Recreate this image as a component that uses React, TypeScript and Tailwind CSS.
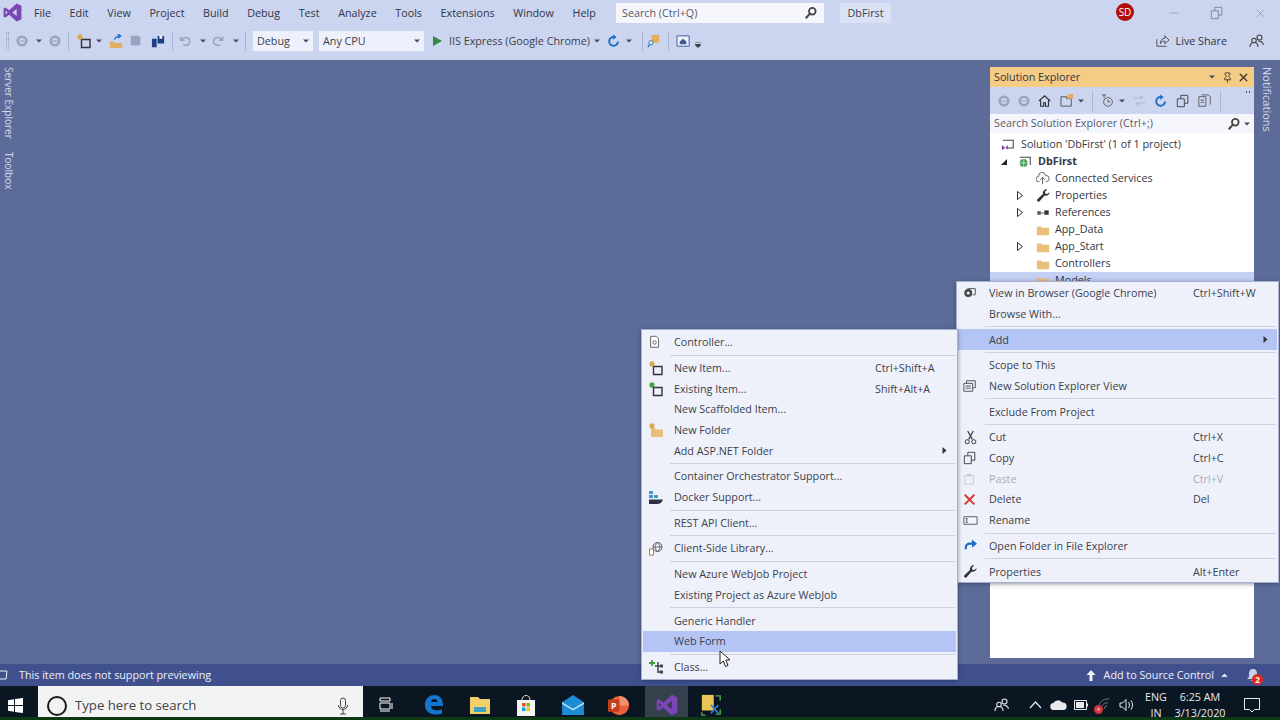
import React from 'react';
import { ChevronUp, Minus, Pin, X } from 'lucide-react';

type Glyph = React.ReactNode;

const Svg = ({ s = 16, children, className }: { s?: number; children: React.ReactNode; className?: string }) => (
  <svg width={s} height={s} viewBox="0 0 16 16" className={className}>
    {children}
  </svg>
);

const Caret = () => (
  <svg width="6" height="4" viewBox="0 0 6 4" className="shrink-0">
    <path d="M0 0.5h6L3 3.5z" fill="#444c66" />
  </svg>
);

const VsLogo = ({ s = 18 }: { s?: number }) => (
  <Svg s={s}>
    <path d="M11.5 0.5 15.500 2.300v11.400L11.500 15.500 5.200 9.800 2 12.300 0.500 11.500v-7L2 3.700 5.200 6.200zM11.500 5 7.800 8l3.700 3zM2.200 6.300v3.400L3.900 8z" fill="#7b45b5" fillRule="evenodd" />
  </Svg>
);

const Folder = ({ c = '#e8c07a' }: { c?: string }) => (
  <Svg s={14}>
    <path d="M1 4h5l1 1.500h8V14H1z" fill={c} />
  </Svg>
);

const Nav = ({ c = '#9aa3bf' }: { c?: string }) => (
  <svg width="12" height="12" viewBox="0 0 12 12">
    <circle cx="6" cy="6" r="5.500" fill={c} />
    <circle cx="6" cy="6" r="3" fill="#ccd5f0" />
    <path d="M3.500 6h5" stroke={c} strokeWidth="1.200" />
  </svg>
);

const Refresh = () => (
  <Svg s={14}>
    <path d="M12.500 8.500A5 5 0 1 1 8 3.500" fill="none" stroke="#1c6fc4" strokeWidth="2.200" />
    <path d="M7 0.500v6l4-3z" fill="#1c6fc4" />
  </Svg>
);

const Vbar = () => <div className="w-px h-[20px] bg-[#a9b3d3]" />;

const Copy = ({ c = '#444' }: { c?: string }) => (
  <Svg s={14}>
    <path d="M1.500 5.500h8v9h-8zM5.500 5V1.500h8v9H10" fill="none" stroke={c} strokeWidth="1.100" />
  </Svg>
);

const Wrench = ({ c = '#333' }: { c?: string }) => (
  <Svg s={15}>
    <path d="M14.500 4.200a4 4 0 0 1-5.300 3.800L3.800 14a1.500 1.500 0 0 1-2.300-2L7.400 6.500A4 4 0 0 1 12 1.500L9.500 4l.5 2 2 .5z" fill={c} />
  </Svg>
);

const Lens = () => (
  <Svg s={14}>
    <circle cx="9.500" cy="6" r="3.800" fill="none" stroke="#444" strokeWidth="2" />
    <path d="M6.500 9l-4.500 5" stroke="#444" strokeWidth="2.400" />
  </Svg>
);

const NewBox = ({ star }: { star: string }) => (
  <Svg s={16}>
    <path d="M5.500 6.500h8.500v8H5.500z" fill="none" stroke="#333" strokeWidth="1.400" />
    <path d="M4 1v6M1 4h6M2 2l4 4M6 2 2 6" stroke={star} strokeWidth="1.200" />
  </Svg>
);

const ClassIcon = () => (
  <Svg s={16}>
    <path d="M4 1v6M1 4h6" stroke="#3d9a3d" strokeWidth="1.800" />
    <path d="M10 3v11M7 7h6M10 13h3" fill="none" stroke="#444" strokeWidth="1.500" />
    <rect x="12" y="5.500" width="3" height="3" fill="#444" />
    <rect x="12" y="11.500" width="3" height="3" fill="#444" />
  </Svg>
);

type Row = { sep: true } | { label: string; icon?: Glyph; key?: string; sub?: boolean; on?: boolean; off?: boolean };

const leftMenu: Row[] = [
  {
    label: 'Controller...',
    icon: (
      <Svg s={14}>
        <path d="M3 1.500h6.500L12 4v10H3z" fill="#fff" stroke="#555" />
        <circle cx="7.500" cy="8.500" r="2" fill="none" stroke="#555" />
      </Svg>
    ),
  },
  { sep: true },
  { label: 'New Item...', key: 'Ctrl+Shift+A', icon: <NewBox star="#d9a441" /> },
  { label: 'Existing Item...', key: 'Shift+Alt+A', icon: <NewBox star="#3d9a3d" /> },
  { label: 'New Scaffolded Item...' },
  {
    label: 'New Folder',
    icon: (
      <Svg s={16}>
        <path d="M3 6h4l1 1.500h7V15H3z" fill="#e8c07a" />
        <path d="M4 1v6M1 4h6M2 2l4 4M6 2 2 6" stroke="#d9a441" strokeWidth="1.200" />
      </Svg>
    ),
  },
  { label: 'Add ASP.NET Folder', sub: true },
  { sep: true },
  { label: 'Container Orchestrator Support...' },
  {
    label: 'Docker Support...',
    icon: (
      <Svg s={16}>
        <path d="M1 2h4v3H1zM1 6h4v3H1zM6 6h4v3H6z" fill="#4b94c9" />
        <path d="M1 10.500h14c-1 3-3 4.500-6 4.500H1z" fill="#2c3242" />
      </Svg>
    ),
  },
  { sep: true },
  { label: 'REST API Client...' },
  { sep: true },
  {
    label: 'Client-Side Library...',
    icon: (
      <Svg s={16}>
        <circle cx="9.500" cy="6" r="4.500" fill="none" stroke="#555" />
        <path d="M5 6h9M9.500 1.500c-3 3-3 6 0 9M9.500 1.500c3 3 3 6 0 9" fill="none" stroke="#555" strokeWidth="0.800" />
        <rect x="1.500" y="8" width="4" height="6" fill="#fff" stroke="#d2752d" />
      </Svg>
    ),
  },
  { sep: true },
  { label: 'New Azure WebJob Project' },
  { label: 'Existing Project as Azure WebJob' },
  { sep: true },
  { label: 'Generic Handler' },
  { label: 'Web Form', on: true },
  { sep: true },
  { label: 'Class...', icon: <ClassIcon /> },
];

const rightMenu: Row[] = [
  {
    label: 'View in Browser (Google Chrome)',
    key: 'Ctrl+Shift+W',
    icon: (
      <Svg s={14}>
        <path d="M5 3h9v7h-3" fill="none" stroke="#444" />
        <circle cx="6" cy="8" r="4.500" fill="#444" />
        <circle cx="6" cy="8" r="1.800" fill="#eef1fa" />
      </Svg>
    ),
  },
  { label: 'Browse With...' },
  { sep: true },
  { label: 'Add', sub: true, on: true },
  { sep: true },
  { label: 'Scope to This' },
  {
    label: 'New Solution Explorer View',
    icon: (
      <Svg s={14}>
        <path d="M1 5h10v9H1zM4 5V2h10v8h-3" fill="none" stroke="#444" />
        <path d="M3 8h6M3 10.500h6" stroke="#444" />
      </Svg>
    ),
  },
  { sep: true },
  { label: 'Exclude From Project' },
  { sep: true },
  {
    label: 'Cut',
    key: 'Ctrl+X',
    icon: (
      <Svg s={15}>
        <path d="M5 1l5 9M11 1l-5 9" stroke="#333" strokeWidth="1.200" />
        <circle cx="4.500" cy="12.500" r="2.200" fill="none" stroke="#333" />
        <circle cx="11.500" cy="12.500" r="2.200" fill="none" stroke="#333" />
      </Svg>
    ),
  },
  { label: 'Copy', key: 'Ctrl+C', icon: <Copy /> },
  {
    label: 'Paste',
    key: 'Ctrl+V',
    off: true,
    icon: (
      <Svg s={14}>
        <path d="M2 4h10v10H2z" fill="#eef0f6" stroke="#c4c8d4" />
        <path d="M5 2h4v3H5z" fill="#c4c8d4" />
      </Svg>
    ),
  },
  {
    label: 'Delete',
    key: 'Del',
    icon: (
      <Svg s={14}>
        <path d="M2 2l11 11M13 2 2 13" stroke="#d13a2c" strokeWidth="2.200" />
      </Svg>
    ),
  },
  {
    label: 'Rename',
    icon: (
      <Svg s={15}>
        <path d="M1 4h14v8H1z" fill="#f4f5fa" stroke="#555" />
        <path d="M4 6v4M3 6h2M3 10h2" stroke="#333" strokeWidth="0.800" />
      </Svg>
    ),
  },
  { sep: true },
  {
    label: 'Open Folder in File Explorer',
    icon: (
      <Svg s={15}>
        <path d="M13 6H7a4 4 0 0 0-4 4v2" fill="none" stroke="#1c6fc4" strokeWidth="2.400" />
        <path d="M9.500 1.500 15 6l-5.500 4.500z" fill="#1c6fc4" />
      </Svg>
    ),
  },
  { sep: true },
  { label: 'Properties', key: 'Alt+Enter', icon: <Wrench /> },
];

const Menu = ({ rows, className, keyCol }: { rows: Row[]; className: string; keyCol: string }) => (
  <div className={`absolute z-10 bg-[#eff1fa] border border-[#a7b0cd] shadow-[0_1px_4px_rgba(30,40,80,0.5)] ${className}`}>
    {rows.map((r, i) =>
      'sep' in r ? (
        <div key={i} className="h-[5px] flex items-center pl-[28px] pr-[2px]">
          <div className="h-px w-full bg-[#ccd2e4]" />
        </div>
      ) : (
        <div key={i} className={`h-[20.7px] mx-[1px] flex items-center ${r.on ? 'bg-[#b3c4f5]' : ''} ${r.off ? 'text-[#a9adba]' : 'text-[#3b3f4c]'}`}>
          <div className="w-[31px] pl-[5px] shrink-0 flex items-center">{r.icon}</div>
          <span className="flex-1 whitespace-nowrap">{r.label}</span>
          {r.key && <span className={`shrink-0 whitespace-nowrap ${keyCol}`}>{r.key}</span>}
          {r.sub && (
            <svg width="5" height="7" viewBox="0 0 5 7" className="mr-[9px]">
              <path d="M0.500 0v7L4.500 3.500z" fill="#333" />
            </svg>
          )}
        </div>
      ),
    )}
  </div>
);

const tree: { label: string; indent: number; iconW: string; arrow?: 'open' | 'closed'; icon: Glyph; bold?: boolean; on?: boolean }[] = [
  {
    label: "Solution 'DbFirst' (1 of 1 project)",
    indent: 11,
    iconW: 'w-[20px]',
    icon: (
      <Svg s={14}>
        <path d="M2 2.500h12v9H6" fill="none" stroke="#444" strokeWidth="1.200" />
        <path d="M1 8l4 3 3-3v5l-3-2-4 3z" fill="#7b4bb3" />
      </Svg>
    ),
  },
  {
    label: 'DbFirst',
    indent: 28,
    iconW: 'w-[20px]',
    arrow: 'open',
    bold: true,
    icon: (
      <Svg s={14}>
        <path d="M2 2.500h12v9" fill="none" stroke="#444" strokeWidth="1.200" />
        <circle cx="6.500" cy="9" r="4.500" fill="#4b9e5a" />
        <path d="M2 9h9M6.500 4.500v9" stroke="#d9efdd" strokeWidth="0.800" />
      </Svg>
    ),
  },
  {
    label: 'Connected Services',
    indent: 46,
    iconW: 'w-[19px]',
    icon: (
      <Svg s={14}>
        <path d="M4 11H3a3 3 0 0 1 0-6 4 4 0 0 1 8-1 3.500 3.500 0 0 1 1 7h-1" fill="none" stroke="#555" />
        <path d="M7.500 6v8M5 9l2.500-3L10 9" fill="none" stroke="#555" />
      </Svg>
    ),
  },
  { label: 'Properties', indent: 46, iconW: 'w-[19px]', arrow: 'closed', icon: <Wrench /> },
  {
    label: 'References',
    indent: 46,
    iconW: 'w-[19px]',
    arrow: 'closed',
    icon: (
      <Svg s={14}>
        <rect x="1.500" y="6" width="4" height="4" fill="#555" />
        <rect x="9.500" y="5" width="5" height="5" fill="#333" />
        <path d="M5 8h5" stroke="#555" />
      </Svg>
    ),
  },
  { label: 'App_Data', indent: 46, iconW: 'w-[19px]', icon: <Folder /> },
  { label: 'App_Start', indent: 46, iconW: 'w-[19px]', arrow: 'closed', icon: <Folder /> },
  { label: 'Controllers', indent: 46, iconW: 'w-[19px]', icon: <Folder /> },
  { label: 'Models', indent: 46, iconW: 'w-[19px]', icon: <Folder />, on: true },
];

const TrayPeople = ({ c }: { c: string }) => (
  <Svg s={16}>
    <circle cx="10.500" cy="4.500" r="2.500" fill="none" stroke={c} strokeWidth="1.100" />
    <circle cx="5" cy="7.500" r="2.200" fill="none" stroke={c} strokeWidth="1.100" />
    <path d="M1 14c0-3 1.500-4.500 4-4.500s4 1.500 4 4.500M9 8c3 0 5 1.500 5.500 4" fill="none" stroke={c} strokeWidth="1.100" />
  </Svg>
);

export default function App() {
  return (
    <div className="relative w-[1280px] h-[720px] overflow-hidden flex flex-col bg-[#5d6b99] text-[10.75px] text-[#3b3f4c] font-['Open_Sans',sans-serif]">
      {/* title bar */}
      <div className="h-[28px] bg-[#ccd5f0] flex items-start pt-[3px] shrink-0">
        <div className="w-[34px] pl-[3px]">
          <VsLogo s={19} />
        </div>
        <div className="h-[20px] flex items-center gap-[18.6px] text-[#2f3446] w-[582px]">
          {['File', 'Edit', 'View', 'Project', 'Build', 'Debug', 'Test', 'Analyze', 'Tools', 'Extensions', 'Window', 'Help'].map((m) => (
            <span key={m}>{m}</span>
          ))}
        </div>
        <div className="w-[208px] h-[20px] bg-[#f5f6fb] flex items-center justify-between pl-[6px] pr-[6px] text-[#555a6b]">
          <span>Search (Ctrl+Q)</span>
          <Lens />
        </div>
        <div className="ml-[16px] w-[51px] h-[20px] bg-[#dbe2f6] flex items-center justify-center">DbFirst</div>
        <div className="ml-[225px] w-[18px] h-[18px] rounded-full bg-[#b00d0d] text-white flex items-center justify-center text-[10px]">SD</div>
        <div className="ml-[33px] flex items-center h-[20px] gap-[29px] text-[#7d859f]">
          <Minus size={14} strokeWidth={1} />
          <Copy c="#7d859f" />
          <X size={15} strokeWidth={1} />
        </div>
      </div>

      {/* toolbar */}
      <div className="h-[32px] bg-[#ccd5f0] flex items-center shrink-0 pb-[6px]">
        <div className="ml-[6px] w-[3px] h-[18px] border-x border-dotted border-[#9aa3bf]" />
        <div className="ml-[7px] flex items-center justify-between w-[45px]">
          <Nav />
          <Caret />
          <Nav />
        </div>
        <div className="ml-[7px]"><Vbar /></div>
        <div className="ml-[7px]"><NewBox star="#d9a441" /></div>
        <div className="ml-[4px]"><Caret /></div>
        <div className="ml-[6.5px]">
          <Svg s={15}>
            <path d="M1 8h4l1 1.500h8V15H1z" fill="#e0b060" />
            <path d="M6 6c1-3 3-4 6-4M9.500 0l3 2-3 2.500" fill="none" stroke="#1c6fc4" strokeWidth="1.400" />
          </Svg>
        </div>
        <div className="ml-[5.5px]">
          <Svg s={14}>
            <path d="M2 2h9l2 2v9H2z" fill="#9aa3bf" />
          </Svg>
        </div>
        <div className="ml-[7.5px]">
          <Svg s={15}>
            <path d="M1 5h5v9H1zM7 2h7v8H7z" fill="#1d3f86" />
            <path d="M9 2h3v3H9z" fill="#fff" />
          </Svg>
        </div>
        <div className="ml-[6.5px]"><Vbar /></div>
        <div className="ml-[6px]">
          <Svg s={14}>
            <path d="M4 6a4.500 4.500 0 1 1 1 6" fill="none" stroke="#9aa3bf" strokeWidth="1.800" />
            <path d="M1 2v6h6z" fill="#9aa3bf" />
          </Svg>
        </div>
        <div className="ml-[7px]"><Caret /></div>
        <div className="ml-[6px]">
          <Svg s={14}>
            <path d="M10 6a4.500 4.500 0 1 0-1 6" fill="none" stroke="#9aa3bf" strokeWidth="1.800" />
            <path d="M13 2v6H7z" fill="#9aa3bf" />
          </Svg>
        </div>
        <div className="ml-[7px]"><Caret /></div>
        <div className="ml-[6px]"><Vbar /></div>
        <div className="ml-[7px] w-[60px] h-[20px] bg-[#eef1fb] flex items-center justify-between pl-[4px] pr-[4px]">
          <span>Debug</span>
          <Caret />
        </div>
        <div className="ml-[6px] w-[105px] h-[20px] bg-[#eef1fb] flex items-center justify-between pl-[4px] pr-[4px]">
          <span>Any CPU</span>
          <Caret />
        </div>
        <svg width="9" height="10" viewBox="0 0 9 10" className="ml-[9px]">
          <path d="M0 0v10l9-5z" fill="#2f8a3a" />
        </svg>
        <span className="ml-[7px] w-[145px] whitespace-nowrap">IIS Express (Google Chrome)</span>
        <Caret />
        <div className="ml-[7px]"><Refresh /></div>
        <div className="ml-[5px]"><Caret /></div>
        <div className="ml-[10px]"><Vbar /></div>
        <div className="ml-[4px]">
          <Svg s={14}>
            <path d="M5 1h9v9H5z" fill="#e0b060" />
            <circle cx="4.500" cy="10" r="2.500" fill="#f6e7c8" stroke="#1c6fc4" />
            <path d="M3 12l-2 3" stroke="#1c6fc4" strokeWidth="1.400" />
          </Svg>
        </div>
        <div className="ml-[7px]"><Vbar /></div>
        <div className="ml-[6.5px]">
          <Svg s={15}>
            <path d="M1 2h13v11H1z" fill="#eef1fb" stroke="#3d5a9a" />
            <path d="M4 8l3.500-3L11 8v3H4z" fill="#3d5a9a" />
          </Svg>
        </div>
        <svg width="6" height="6" viewBox="0 0 6 6" className="ml-[4.5px] mt-[8px]">
          <path d="M0 0h6M0 2.500h6L3 5.500z" stroke="#333" fill="#333" strokeWidth="0.800" />
        </svg>
        <div className="flex-1" />
        <Svg s={14}>
          <path d="M1 6v8h11" fill="none" stroke="#444" />
          <path d="M5 11c0-4 2-6 5-6V2l5 5-5 4V8c-2 0-4 1-5 3z" fill="none" stroke="#444" />
        </Svg>
        <span className="ml-[6px] text-[#2f3446]">Live Share</span>
        <div className="ml-[22px] mr-[15px]"><TrayPeople c="#444" /></div>
      </div>

      {/* work area */}
      <div className="flex-1 flex min-h-0">
        <div className="w-[16px] pt-[7px] pl-[2px] flex gap-[13px] text-[#d5dbee] text-[10px] [writing-mode:vertical-rl]">
          <span>Server Explorer</span>
          <span>Toolbox</span>
        </div>
        <div className="flex-1" />
        <div className="relative w-[264px] mt-[7px] mb-[6px] flex flex-col bg-white">
          <div className="h-[20px] bg-[#f5cc84] flex items-center pl-[4px] pr-[4px] text-[#2f3446] shrink-0">
            <span className="flex-1">Solution Explorer</span>
            <Caret />
            <Pin size={11} className="text-[#443a2c] ml-[6.5px] mr-[4.5px]" />
            <X size={13} strokeWidth={2.500} className="text-[#443a2c]" />
          </div>
          <div className="relative h-[27px] bg-[#ccd5f0] flex items-center pl-[8px] gap-[8px] shrink-0">
            <Nav />
            <Nav />
            <Svg s={14}>
              <path d="M1 8l6.500-6L14 8M3 7v7h3.500v-4h2v4H12V7" fill="none" stroke="#333" strokeWidth="1.300" />
            </Svg>
            <div className="flex items-center gap-[3px]">
              <Svg s={15}>
                <path d="M1 4h6v2h5v8H1z" fill="none" stroke="#555" />
                <path d="M8 1h6v5H8z" fill="#e0b060" />
              </Svg>
              <Caret />
            </div>
            <div className="h-[20px] w-px bg-[#a9b3d3]" />
            <div className="flex items-center gap-[4px]">
              <Svg s={14}>
                <circle cx="8" cy="9" r="5" fill="none" stroke="#555" />
                <path d="M8 6v3h2.500M1 1h5M3.500 1v4" fill="none" stroke="#555" />
              </Svg>
              <Caret />
            </div>
            <Svg s={13}>
              <path d="M1 5h11M9 2l3 3M15 11H4M7 14l-3-3" fill="none" stroke="#aab2cc" strokeWidth="1.300" />
            </Svg>
            <Refresh />
            <Copy />
            <Svg s={14}>
              <path d="M1 3h8v11H1zM4 1h8l2 2v9" fill="none" stroke="#555" />
              <path d="M3 7h4M3 9.500h4" stroke="#555" />
            </Svg>
            <div className="h-[20px] w-px bg-[#a9b3d3]" />
            <div className="absolute right-[4px] top-[4px] w-[4px] h-[2px] border-x border-[#444c66]" />
          </div>
          <div className="h-[19px] bg-[#f5f6fb] flex items-center pl-[4px] pr-[4px] text-[#555a6b] shrink-0">
            <span className="flex-1">Search Solution Explorer (Ctrl+;)</span>
            <Lens />
            <div className="ml-[3px]"><Caret /></div>
          </div>
          <div className="flex-1 pt-[3px] text-[#333744]">
            {tree.map((t) => (
              <div key={t.label} className={`relative h-[17px] flex items-center ${t.on ? 'bg-[#c4d1f5]' : ''}`} style={{ paddingLeft: t.indent }}>
                {t.arrow === 'open' && (
                  <svg width="6" height="6" viewBox="0 0 6 6" className="absolute left-[11px]">
                    <path d="M6 0v6H0z" fill="#222" />
                  </svg>
                )}
                {t.arrow === 'closed' && (
                  <svg width="6" height="9" viewBox="0 0 6 9" className="absolute left-[27px]">
                    <path d="M0.500 0.500v8L5.500 4.500z" fill="none" stroke="#333" />
                  </svg>
                )}
                <div className={`shrink-0 flex items-center ${t.iconW}`}>{t.icon}</div>
                <span className={t.bold ? 'font-bold' : ''}>{t.label}</span>
              </div>
            ))}
          </div>
        </div>
        <div className="w-[26px] pt-[7px] pr-[5px] text-[#d5dbee] text-[11px] [writing-mode:vertical-rl]">Notifications</div>
      </div>

      {/* status bar */}
      <div className="h-[22px] bg-[#40508d] text-[#eef1fb] flex items-center shrink-0">
        <svg width="8" height="10" viewBox="0 0 8 10">
          <path d="M-2 1h9l-1 8h-8z" fill="none" stroke="#eef1fb" />
        </svg>
        <span className="ml-[11px]">This item does not support previewing</span>
        <div className="flex-1" />
        <svg width="10" height="11" viewBox="0 0 10 11">
          <path d="M5 0 9.500 5H6.500v6h-3V5H.5z" fill="#eef1fb" />
        </svg>
        <span className="ml-[8px]">Add to Source Control</span>
        <ChevronUp size={9} strokeWidth={3} className="ml-[6px]" fill="#eef1fb" />
        <div className="relative ml-[17px] mr-[18px] w-[16px]">
          <svg width="14" height="15" viewBox="0 0 14 15">
            <path d="M7 1c3 0 4 2 4 5v3l2 2H1l2-2V6c0-3 1-5 4-5zM5 12h4l-2 2z" fill="#c9cfe4" />
          </svg>
          <div className="absolute left-[6px] top-[6px] w-[11px] h-[11px] rounded-full bg-[#d9281e] text-white text-[8px] font-bold leading-[11px] text-center">2</div>
        </div>
      </div>

      {/* taskbar */}
      <div className="h-[34px] bg-[#0a1722] border-b-[3px] border-[#0d3a12] flex items-stretch shrink-0 text-white">
        <div className="w-[38px] flex items-center pl-[8px] pt-[7px]">
          <svg width="15" height="15" viewBox="0 0 15 15">
            <path d="M0 2.200 6 1.300V7H0zM7 1.100 15 0v7H7zM0 8h6v5.700L0 12.800zM7 8h8v7L7 13.900z" fill="#fff" />
          </svg>
        </div>
        <div className="w-[325px] bg-[#f2f3f3] flex items-center pl-[9px] pt-[8px] text-[#2d2d2d]">
          <div className="w-[20px] h-[20px] rounded-full border-[2.500px] border-[#1a1a1a]" />
          <span className="ml-[8px] text-[13.2px] flex-1 text-[#444]">Type here to search</span>
          <svg width="12" height="18" viewBox="0 0 12 18" className="mr-[14px]">
            <rect x="3.500" y="1" width="5" height="10" rx="2.500" fill="none" stroke="#444" />
            <path d="M1.500 8c0 6 9 6 9 0M6 13v4M3 17h6" fill="none" stroke="#444" />
          </svg>
        </div>
        <div className="flex items-center pl-[14px]">
          <div className="w-[47px] flex pt-[7px]">
            <svg width="16" height="16" viewBox="0 0 16 16">
              <path d="M3 1h10v3H3zM3 6h10v6H3zM3 14h10" fill="none" stroke="#fff" />
              <path d="M15 6v6" stroke="#fff" />
            </svg>
          </div>
          <div className="w-[46px] flex pt-[7px]">
            <svg width="20" height="22" viewBox="0 0 20 22">
              <path d="M1 11C1 4 6 1 10.500 1 16 1 19 5 19 12H7c0 4 6 6 11 3v4.500C11 22 1 20 1 11zM7 8h6.500c0-4-6-4-6.500 0z" fill="#1276cf" />
            </svg>
          </div>
          <div className="w-[46px] flex pt-[7px]">
            <svg width="20" height="18" viewBox="0 0 20 18">
              <path d="M0 1h8l2 2h10v15H0z" fill="#f3cf6a" />
              <path d="M4 11h12v5H4z" fill="#3f9fc6" />
            </svg>
          </div>
          <div className="w-[46px] flex pt-[7px]">
            <svg width="20" height="22" viewBox="0 0 20 22">
              <path d="M6 6c0-6 8-6 8 0" fill="none" stroke="#ddd" />
              <path d="M1 6h18v16H1z" fill="#f4f4f4" />
              <path d="M6 9h3.500v3.500H6z" fill="#e9532b" />
              <path d="M10.500 9H14v3.500h-3.500z" fill="#7fba00" />
              <path d="M6 13.500h3.500V17H6z" fill="#00a4ef" />
              <path d="M10.500 13.500H14V17h-3.500z" fill="#ffb900" />
            </svg>
          </div>
          <div className="w-[46px] flex pt-[7px]">
            <svg width="22" height="20" viewBox="0 0 24 22">
              <path d="M0 8 12 0l12 8v14H0z" fill="#1e8bd6" />
              <path d="M0 8l12 7 12-7v2l-12 7L0 10z" fill="#bfe4f8" />
            </svg>
          </div>
          <div className="w-[37px] flex pt-[7px]">
            <svg width="21" height="21" viewBox="0 0 24 24">
              <circle cx="13" cy="12" r="11" fill="#e8613c" />
              <path d="M13 1a11 11 0 0 1 11 11H13z" fill="#f2906f" />
              <rect x="0" y="5" width="13" height="14" rx="1" fill="#c53f1d" />
              <text x="6.500" y="16" fontSize="10" fill="#fff" textAnchor="middle" fontWeight="700">P</text>
            </svg>
          </div>
          <div className="w-[43px] h-full bg-[#34404b] flex items-center justify-center pt-[7px]">
            <VsLogo s={22} />
          </div>
          <div className="ml-[12px] flex pt-[7px]">
            <svg width="22" height="22" viewBox="0 0 22 24">
              <path d="M1 1h13v17H1z" fill="#e9c65a" />
              <path d="M16 2h5v5M21 17v5h-5M1 20v3h4" fill="none" stroke="#4fae4f" strokeWidth="1.500" />
              <path d="M11 12l8 9M19 12l-8 9" stroke="#2f7fd0" strokeWidth="2" />
            </svg>
          </div>
        </div>
        <div className="flex-1" />
        <div className="flex items-center gap-[7px] pt-[7px] text-[#e7e9ec]">
          <div className="mr-[12px]"><TrayPeople c="#e7e9ec" /></div>
          <svg width="13" height="8" viewBox="0 0 13 8">
            <path d="M1 7l5.500-6L12 7" fill="none" stroke="#e7e9ec" strokeWidth="1.200" />
          </svg>
          <div className="ml-[1px]">
            <svg width="17" height="10" viewBox="0 0 17 10">
              <path d="M4 10a3.500 3.500 0 0 1-.5-7A5 5 0 0 1 12 2.500 3.800 3.800 0 0 1 13.500 10z" fill="#e7e9ec" />
            </svg>
          </div>
          <svg width="15" height="10" viewBox="0 0 15 10">
            <path d="M.5.500h12v9H.5z" fill="none" stroke="#e7e9ec" />
            <path d="M2 2h8v6H2z" fill="#e7e9ec" />
            <path d="M13.500 3.500v3" stroke="#e7e9ec" />
          </svg>
          <div className="relative w-[16px] h-[16px]">
            <svg width="16" height="16" viewBox="0 0 16 16">
              <path d="M5 12a6 6 0 0 1 7-6M8 12a3 3 0 0 1 3-3M3 8a9 9 0 0 1 10-6" fill="none" stroke="#6b7480" />
            </svg>
            <div className="absolute left-[-2px] bottom-[-1px] w-[9px] h-[9px] rounded-full bg-[#d0343c] text-[7px] leading-[9px] text-center">×</div>
          </div>
          <svg width="16" height="14" viewBox="0 0 16 14">
            <path d="M1 5h2.500L7 1.500v11L3.500 9H1zM9.500 4c1.200 2 1.200 4 0 6M12 2.500c2 3 2 6 0 9" fill="none" stroke="#e7e9ec" />
          </svg>
        </div>
        <div className="ml-[8px] w-[26px] flex flex-col items-center justify-center pt-[7px] text-[10.75px] leading-[16px] text-[#e7e9ec]">
          <span>ENG</span>
          <span>IN</span>
        </div>
        <div className="ml-[1px] w-[60px] flex flex-col items-center justify-center pt-[7px] text-[10.75px] leading-[16px] text-[#e7e9ec]">
          <span>6:25 AM</span>
          <span>3/13/2020</span>
        </div>
        <div className="w-[50px] flex items-center pl-[14px] pt-[7px]">
          <svg width="16" height="15" viewBox="0 0 16 15">
            <path d="M.5.500h15v11h-5L8 14l-2.500-2.500h-5z" fill="none" stroke="#e7e9ec" />
          </svg>
        </div>
      </div>

      {/* context menus */}
      <Menu rows={rightMenu} keyCol="w-[84px]" className="left-[956px] top-[281px] w-[323px] pt-[1px]" />
      <Menu rows={leftMenu} keyCol="w-[81px]" className="left-[641px] top-[329px] w-[317px] pt-[2px] pb-[2px]" />

      {/* mouse pointer */}
      <svg width="13" height="18" viewBox="0 0 13 18" className="absolute z-20 left-[719px] top-[650px]">
        <path d="M1 1v13l3.300-3 2.200 5.500 2.500-1L6.800 10H11z" fill="#fff" stroke="#222" />
      </svg>
    </div>
  );
}
